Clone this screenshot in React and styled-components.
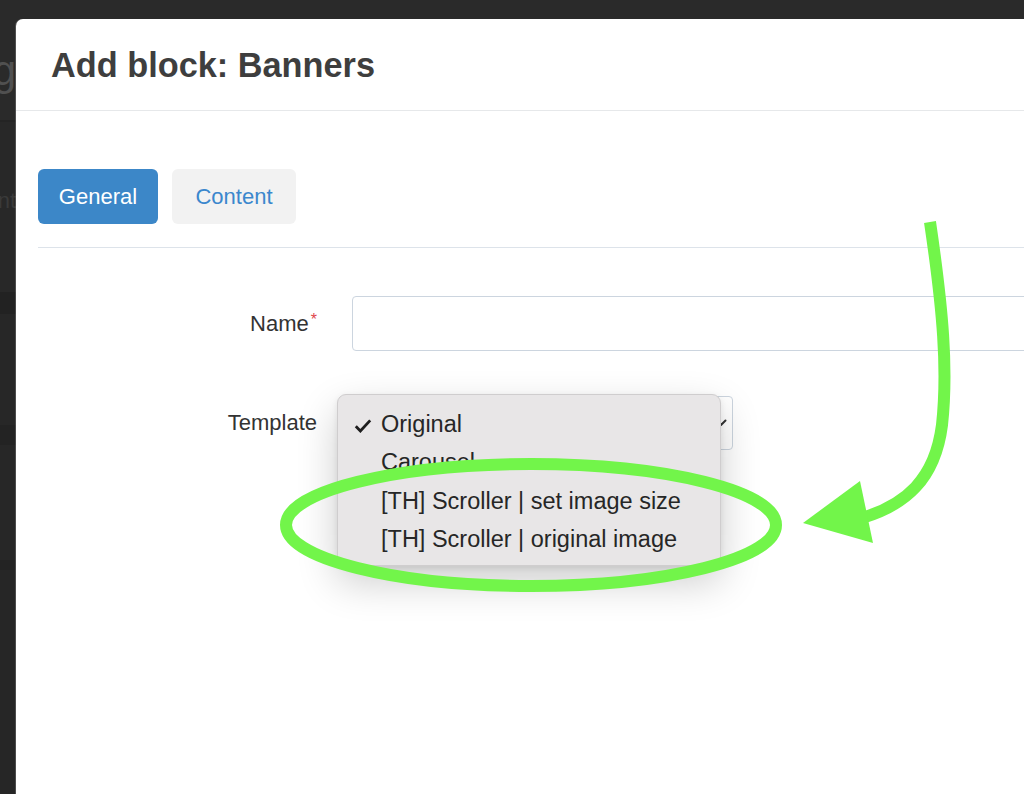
import React from "react";
import styled, { createGlobalStyle } from "styled-components";

const GlobalStyle = createGlobalStyle`
  html, body {
    margin: 0;
    padding: 0;
    width: 1024px;
    height: 794px;
    overflow: hidden;
    background: #262626;
    font-family: "Liberation Sans", Arial, Helvetica, sans-serif;
  }
  * { box-sizing: border-box; }
`;

const Page = styled.div`
  position: relative;
  width: 1024px;
  height: 794px;
  overflow: hidden;
  background: linear-gradient(
    to bottom,
    #2a2a2a 0px,
    #2a2a2a 120px,
    #242424 120px,
    #242424 122px,
    #282828 122px,
    #282828 292px,
    #222222 292px,
    #222222 314px,
    #272727 314px,
    #272727 425px,
    #232323 425px,
    #232323 445px,
    #272727 445px,
    #272727 560px,
    #232323 560px,
    #232323 570px,
    #262626 570px
  );
`;

const Backdrop = styled.div`
  display: flex;
  flex-direction: column;
  padding-top: 46px;
`;

const BackdropClip = styled.div`
  width: 16px;
  overflow: hidden;
  display: flex;
  justify-content: flex-end;
  margin-top: ${(p) => p.$mt || 0}px;
`;

const BackdropText = styled.span`
  white-space: nowrap;
  font-size: ${(p) => p.$size}px;
  color: ${(p) => p.$color};
  line-height: 1.2;
`;

const Modal = styled.div`
  position: absolute;
  left: 16px;
  top: 19px;
  width: 1100px;
  height: 820px;
  background: #ffffff;
  border-radius: 7px 0 0 0;
  box-shadow: -1px 0 0 rgba(255, 255, 255, 0.18);
`;

const Header = styled.div`
  height: 92px;
  padding: 27px 0 0 35px;
  border-bottom: 1px solid #e6e8ea;
`;

const Title = styled.h1`
  margin: 0;
  font-size: 34.3px;
  line-height: 39px;
  font-weight: 700;
  color: #3e3e3e;
`;

const Body = styled.div`
  padding-left: 22px;
`;

const TabBar = styled.div`
  display: flex;
  gap: 14px;
  margin-top: 58px;
  padding-bottom: 23px;
  border-bottom: 1px solid #dde3ea;
`;

const Tab = styled.button`
  height: 55px;
  width: ${(p) => p.$w}px;
  border: none;
  border-radius: 6px;
  padding: 0;
  font-family: inherit;
  font-size: 22px;
  background: ${(p) => (p.$active ? "#3c87c8" : "#f2f2f2")};
  color: ${(p) => (p.$active ? "#ffffff" : "#3b87cd")};
`;

const Form = styled.div`
  display: flex;
  flex-direction: column;
  gap: 45px;
  margin-top: 48px;
`;

const Row = styled.div`
  display: flex;
  align-items: center;
  gap: 35px;
`;

const Label = styled.label`
  width: 279px;
  text-align: right;
  font-size: 22px;
  color: #333333;
`;

const Required = styled.sup`
  color: #e0474c;
  font-size: 16px;
  margin-left: 2px;
  vertical-align: 6px;
  line-height: 0;
`;

const Input = styled.div`
  flex: 1;
  height: 55px;
  border: 1px solid #ccd5df;
  border-radius: 4px;
  background: #fff;
`;

const SelectWrap = styled.div`
  position: relative;
  width: 381px;
  height: 54px;
`;

const SelectBox = styled.div`
  height: 54px;
  border: 1px solid #ccd5df;
  border-radius: 4px;
  display: flex;
  align-items: center;
  justify-content: flex-end;
  padding-right: 5px;
`;

const Popup = styled.div`
  position: absolute;
  left: -15px;
  top: -2px;
  width: 384px;
  height: 172px;
  padding: 10px 0 8px 0;
  background: #e8e6e7;
  border: 1px solid #cfcdce;
  border-radius: 9px;
  box-shadow: 0 16px 40px rgba(0, 0, 0, 0.2), 0 2px 6px rgba(0, 0, 0, 0.08);
`;

const Item = styled.div`
  height: 38.5px;
  display: flex;
  align-items: center;
  font-size: 23.5px;
  color: #262626;
  white-space: nowrap;
`;

const Check = styled.span`
  width: 43px;
  padding-left: 16px;
  display: flex;
  align-items: center;
  margin-top: 4px;
`;

const Annotation = styled.svg`
  position: absolute;
  left: 0;
  top: 0;
  pointer-events: none;
`;

const CheckIcon = () => (
  <svg width="18" height="14" viewBox="0 0 18 14">
    <path
      d="M1.8 7.2 L6.4 12 L16.2 1.4"
      fill="none"
      stroke="#1e1e1e"
      strokeWidth="2.8"
      strokeLinecap="butt"
      strokeLinejoin="miter"
    />
  </svg>
);

const items = [
  { label: "Original", checked: true },
  { label: "Carousel" },
  { label: "[TH] Scroller | set image size" },
  { label: "[TH] Scroller | original image" },
];

export default function App() {
  return (
    <>
      <GlobalStyle />
      <Page>
        <Backdrop>
          <BackdropClip>
            <BackdropText $size={42} $color="#505050">Listing</BackdropText>
          </BackdropClip>
          <BackdropClip $mt={92}>
            <BackdropText $size={22} $color="#3a3a3a">Content</BackdropText>
          </BackdropClip>
        </Backdrop>

        <Modal>
          <Header>
            <Title>Add block: Banners</Title>
          </Header>
          <Body>
            <TabBar>
              <Tab $active $w={120}>General</Tab>
              <Tab $w={124}>Content</Tab>
            </TabBar>
            <Form>
              <Row>
                <Label>
                  Name
                  <Required>*</Required>
                </Label>
                <Input />
              </Row>
              <Row>
                <Label>Template</Label>
                <SelectWrap>
                  <SelectBox>
                    <svg width="12" height="8" viewBox="0 0 12 8">
                      <path d="M1.5 1.5 L6 6 L10.5 1.5" fill="none" stroke="#333" strokeWidth="2" strokeLinecap="round" strokeLinejoin="round" />
                    </svg>
                  </SelectBox>
                  <Popup>
                    {items.map((it) => (
                      <Item key={it.label}>
                        <Check>{it.checked ? <CheckIcon /> : null}</Check>
                        {it.label}
                      </Item>
                    ))}
                  </Popup>
                </SelectWrap>
              </Row>
            </Form>
          </Body>
        </Modal>

        <Annotation width="1024" height="794" viewBox="0 0 1024 794">
          <ellipse cx="531" cy="525" rx="245" ry="61" fill="none" stroke="#72f54a" strokeWidth="12" />
          <path
            d="M930 222 C 943 310, 948 370, 942 425 C 935 480, 905 505, 862 518"
            fill="none"
            stroke="#72f54a"
            strokeWidth="12"
          />
          <polygon points="803,523 860,481 873,543" fill="#72f54a" />
        </Annotation>
      </Page>
    </>
  );
}
